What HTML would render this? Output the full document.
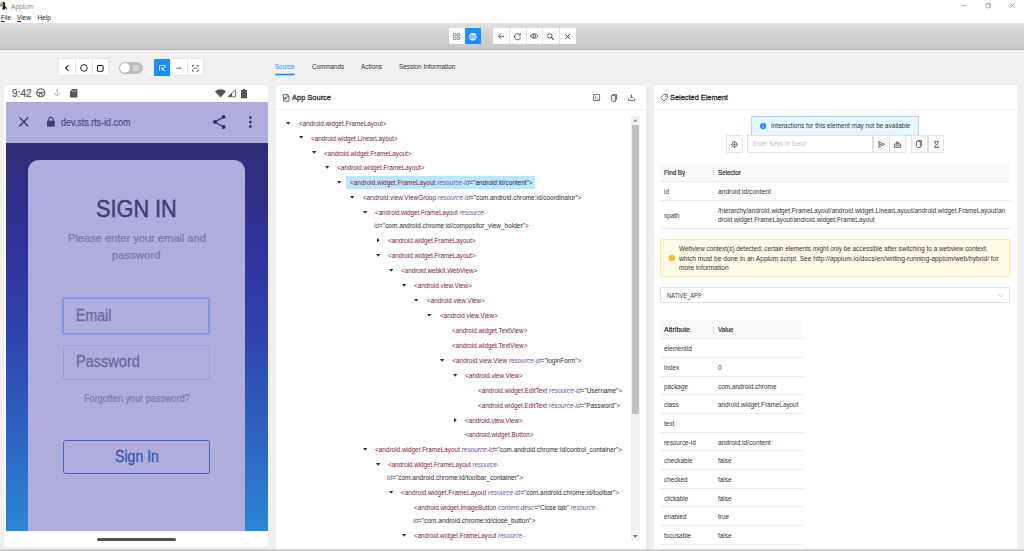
<!DOCTYPE html>
<html><head><meta charset="utf-8"><title>Appium</title>
<style>
*{box-sizing:border-box;margin:0;padding:0}
html,body{width:1024px;height:551px;overflow:hidden;background:#f0f0f0;font-family:"Liberation Sans",sans-serif;}
.a{position:absolute}
.t{position:absolute;white-space:nowrap;line-height:1;transform-origin:0 0}
.t i{font-style:italic}
svg{position:absolute;overflow:visible}

.panel{position:absolute;background:#fff}
.hl{position:absolute;height:0.6px;background:#ececec}
</style></head><body>
<div class="a" style="left:0px;top:0px;width:1024.00px;height:23.00px;background:#fff"></div>
<div class="a" style="left:0px;top:23px;width:1024.00px;height:27.00px;background:linear-gradient(#e1e1e1 0%,#d2d2d2 45%,#c9c9c9 100%);border-bottom:0.8px solid #b0b0b0"></div>
<svg style="left:0px;top:0px" width="8" height="10" viewBox="0 0 8 10"><path d="M2.4 2.2Q4.6 1.5 5 3L5.2 6.4L7.3 8.4L6.8 8.9L5.1 8L4.8 9.6H2.2L2.8 7Z" fill="#111"/><path d="M0 2.7Q1.5 2.1 3.1 2.7V4L0 4.2Z" fill="#f5a31a"/><path d="M0 4.4L2.4 4.2L2.6 6.4Q1 6.8 0 6.2Z" fill="#2f9ae8"/><circle cx="3" cy="5" r="0.9" fill="#cf4f6a"/></svg>
<svg style="left:960px;top:2px" width="60" height="8" viewBox="0 0 60 8"><path d="M1 3.5h5" stroke="#888" stroke-width="0.6" fill="none"/><path d="M26 2.2h3.6v3.6h-3.6zM27 2.2v-1h3.6v3.6h-1" stroke="#888" stroke-width="0.6" fill="none"/><path d="M50 1l5 5M55 1l-5 5" stroke="#888" stroke-width="0.6" fill="none"/></svg>
<div class="a" style="left:448.5px;top:28px;width:16.50px;height:16.30px;background:#fff;border-radius:1px 0 0 1px"></div>
<div class="a" style="left:464.8px;top:27.8px;width:16.40px;height:16.70px;background:#1890ff;border-radius:0 1px 1px 0"></div>
<div class="a" style="left:492.7px;top:28px;width:82.90px;height:16.30px;background:#fff;border-radius:1px"></div>
<div class="a" style="left:509.03px;top:28px;width:0.50px;height:16.30px;background:#e2e2e2"></div>
<div class="a" style="left:525.61px;top:28px;width:0.50px;height:16.30px;background:#e2e2e2"></div>
<div class="a" style="left:542.1899999999999px;top:28px;width:0.50px;height:16.30px;background:#e2e2e2"></div>
<div class="a" style="left:558.77px;top:28px;width:0.50px;height:16.30px;background:#e2e2e2"></div>
<svg style="left:453px;top:32.8px" width="7" height="7" viewBox="0 0 7 7"><rect x="0.4" y="0.4" width="2.5" height="2.5" rx="0.5" stroke="#444" stroke-width="0.6" fill="none"/><rect x="4.1" y="0.4" width="2.5" height="2.5" rx="0.5" stroke="#444" stroke-width="0.6" fill="none"/><rect x="0.4" y="4.1" width="2.5" height="2.5" rx="0.5" stroke="#444" stroke-width="0.6" fill="none"/><rect x="4.1" y="4.1" width="2.5" height="2.5" rx="0.5" stroke="#444" stroke-width="0.6" fill="none"/></svg>
<svg style="left:469.2px;top:32.6px" width="7.6" height="7.6" viewBox="0 0 7.6 7.6"><circle cx="3.8" cy="3.8" r="3.8" fill="#fff"/><path d="M0.7 2.3Q3.8 3.1 6.9 2.3M0.2 3.9h7.2M0.7 5.4Q3.8 4.6 6.9 5.4" stroke="#1890ff" stroke-width="0.65" fill="none"/><ellipse cx="3.8" cy="3.8" rx="1.6" ry="3.5" stroke="#1890ff" stroke-width="0.25" fill="none"/></svg>
<svg style="left:497.8px;top:33.0px" width="6.4" height="6.6" viewBox="0 0 6.4 6.6"><path d="M6 3.3H0.6M3.2 0.5L0.5 3.3l2.7 2.8" stroke="#333" stroke-width="0.75" fill="none"/></svg>
<svg style="left:514px;top:32.8px" width="7" height="7" viewBox="0 0 7 7"><path d="M6.0 1.9A3.1 3.1 0 1 0 6.5 4.3" stroke="#333" stroke-width="0.75" fill="none"/><path d="M6.5 0.6v1.6h-1.6" stroke="#333" stroke-width="0.7" fill="none"/></svg>
<svg style="left:529.8px;top:33.3px" width="8.4" height="6" viewBox="0 0 8.4 6"><path d="M0.3 3C2 0 6.4 0 8.1 3C6.4 6 2 6 0.3 3Z" stroke="#333" stroke-width="0.75" fill="none"/><circle cx="4.2" cy="3" r="1.4" stroke="#333" stroke-width="0.75" fill="none"/></svg>
<svg style="left:547.3px;top:32.8px" width="7" height="7" viewBox="0 0 7 7"><circle cx="2.8" cy="2.8" r="2.2" stroke="#333" stroke-width="0.75" fill="none"/><path d="M4.4 4.4l2.3 2.3" stroke="#333" stroke-width="1.1" fill="none"/></svg>
<svg style="left:565.1px;top:33.8px" width="5" height="5" viewBox="0 0 5 5"><path d="M0.3 0.3l4.4 4.4M4.7 0.3L0.3 4.7" stroke="#333" stroke-width="0.85" fill="none"/></svg>
<div class="a" style="left:58px;top:58.4px;width:51.20px;height:17.60px;background:#fff;border:0.6px solid #e6e6e6;border-radius:1.5px"></div>
<div class="a" style="left:74.95px;top:59px;width:0.60px;height:16.40px;background:#e4e4e4"></div>
<div class="a" style="left:91.60000000000001px;top:59px;width:0.60px;height:16.40px;background:#e4e4e4"></div>
<svg style="left:65.1px;top:65.1px" width="4" height="6.2" viewBox="0 0 4 6.2"><path d="M3.4 0.3L0.7 3.1l2.7 2.8" stroke="#222" stroke-width="1.15" fill="none"/></svg>
<svg style="left:79.5px;top:64.2px" width="7.8" height="7.8" viewBox="0 0 7.8 7.8"><circle cx="3.9" cy="3.9" r="3.35" stroke="#222" stroke-width="1" fill="none"/></svg>
<svg style="left:96.7px;top:64.8px" width="6.6" height="6.8" viewBox="0 0 6.6 6.8"><rect x="0.5" y="0.5" width="5.6" height="5.8" rx="0.3" stroke="#222" stroke-width="1" fill="none"/></svg>
<div class="a" style="left:119.2px;top:61.9px;width:24.00px;height:12.10px;background:#bfbfbf;border-radius:6.1px"></div>
<div class="a" style="left:120.2px;top:62.9px;width:10.10px;height:10.10px;background:#fff;border-radius:50%;box-shadow:0 0.5px 1px rgba(0,0,0,.25)"></div>
<svg style="left:133.1px;top:65.1px" width="6" height="6" viewBox="0 0 6 6"><circle cx="3" cy="3" r="2.5" stroke="#ececec" stroke-width="0.8" fill="none"/><circle cx="3" cy="3" r="1" fill="#ececec"/></svg>
<div class="a" style="left:160px;top:58.4px;width:44.20px;height:17.60px;background:#fff;border:0.6px solid #e6e6e6;border-radius:1.5px"></div>
<div class="a" style="left:153.6px;top:58.6px;width:16.60px;height:17.20px;background:#1890ff;border-radius:1.5px 0 0 1.5px"></div>
<div class="a" style="left:187.2px;top:59px;width:0.60px;height:16.40px;background:#e4e4e4"></div>
<svg style="left:158.8px;top:64.7px" width="6.6" height="6.6" viewBox="0 0 6.6 6.6"><path d="M0.5 6V0.5H6V3" stroke="#fff" stroke-width="0.8" fill="none"/><path d="M2.4 2.4L5 3.4L3.9 3.9L6 6L5.6 6.3L3.6 4.2L3.2 5.2Z" fill="#fff" stroke="#fff" stroke-width="0.4"/></svg>
<svg style="left:176.2px;top:66.4px" width="5.4" height="3.4" viewBox="0 0 5.4 3.4"><path d="M0.2 2.3h4.6M3.4 0.7l1.5 1.6" stroke="#333" stroke-width="0.7" fill="none"/></svg>
<svg style="left:192px;top:64.8px" width="6.6" height="6.6" viewBox="0 0 6.6 6.6"><path d="M0.5 2V0.5H2M4.6 0.5H6.1V2M6.1 4.6V6.1H4.6M2 6.1H0.5V4.6M1.5 3.3h3.6" stroke="#333" stroke-width="0.75" fill="none"/></svg>
<div class="a" style="left:4px;top:84.5px;width:263.50px;height:462.30px;background:#fcfcfc"></div>
<div class="a" style="left:5.5px;top:84.5px;width:262px;height:462.3px;background:#fff;overflow:hidden">
<div class="a" style="left:0;top:17.3px;width:262px;height:41.3px;background:#aeaddc"></div>
<div class="a" style="left:0;top:58.6px;width:262px;height:388px;background:linear-gradient(#2f2c76 0%,#31319a 26%,#2f45ac 50%,#2d64c3 77%,#2b87d2 100%)"></div>
<div class="a" style="left:22.2px;top:75px;width:217.5px;height:380px;background:#aeaddc;border-radius:11px 11px 0 0"></div>
<div class="a" style="left:0;top:446.5px;width:262px;height:16px;background:#fff"></div>
<div class="a" style="left:91.5px;top:453.6px;width:79px;height:3px;border-radius:2px;background:#555"></div>
<div class="a" style="left:57.5px;top:213.4px;width:146.4px;height:36px;border-radius:2.5px;background:#aeaddc;border:1px solid #7b94dd;box-shadow:0 0 0 1.6px rgba(115,145,232,.5)"></div>
<div class="a" style="left:57.9px;top:260.4px;width:146.3px;height:35.2px;border-radius:2.5px;border:0.8px solid #a09fd0"></div>
<div class="a" style="left:57.5px;top:355px;width:147px;height:34.9px;border-radius:3px;border:1px solid #4565bd"></div>
</div>
<svg style="left:36.2px;top:88.4px" width="9.6" height="9.6" viewBox="0 0 9.6 9.6"><circle cx="4.8" cy="4.8" r="4" stroke="#555" stroke-width="1.1" fill="none"/><path d="M0.8 4.3h8M3 8.3l1-3.2h1.6l1 3.2" stroke="#555" stroke-width="1" fill="none"/></svg>
<svg style="left:54px;top:89px" width="6.4" height="8.4" viewBox="0 0 6.4 8.4"><circle cx="3.2" cy="1.3" r="0.9" fill="#999"/><path d="M3.2 2.2v4M0.8 4.2c0 3 4.8 3 4.8 0M0.6 4.2h1.2M4.6 4.2h1.2" stroke="#999" stroke-width="0.7" fill="none"/></svg>
<svg style="left:69.5px;top:88.8px" width="7.4" height="8.6" viewBox="0 0 7.4 8.6"><path d="M2.4 0H7.4V8.6H0V2.4Z" fill="#555"/><path d="M2.6 1.2v2M4.1 1.2v2M5.6 1.2v2" stroke="#ddd" stroke-width="0.6"/></svg>
<svg style="left:215px;top:89px" width="11" height="8.4" viewBox="0 0 11 8.4"><path d="M0 2.6C3 -0.6 8 -0.6 11 2.6L5.5 8.4Z" fill="#555"/></svg>
<svg style="left:227.2px;top:89.2px" width="9" height="8.2" viewBox="0 0 9 8.2"><path d="M8.5 0.8V7.8H0.9Z" stroke="#555" stroke-width="0.8" fill="none"/><path d="M5 4V7.8H0.9Z" fill="#555"/></svg>
<svg style="left:241px;top:88.5px" width="6" height="9.2" viewBox="0 0 6 9.2"><path d="M1.8 0h2.4v1H6v8.2H0V1h1.8Z" fill="#555"/></svg>
<svg style="left:18.6px;top:117.3px" width="9.6" height="9.6" viewBox="0 0 9.6 9.6"><path d="M0.4 0.4l8.8 8.8M9.2 0.4L0.4 9.2" stroke="#2e2b70" stroke-width="1.3" fill="none"/></svg>
<svg style="left:46.9px;top:117.4px" width="7.8" height="9.6" viewBox="0 0 7.8 9.6"><path d="M0 3.6h7.8v6H0z" fill="#3c3a80"/><path d="M1.8 3.8V2.4a2.1 2.1 0 0 1 4.2 0V3.8" stroke="#3c3a80" stroke-width="1.1" fill="none"/></svg>
<svg style="left:213px;top:115.3px" width="13" height="14" viewBox="0 0 13 14"><path d="M10.6 1.9L1.9 6.9L10.6 12" stroke="#2e2b70" stroke-width="1.2" fill="none"/><circle cx="10.6" cy="1.9" r="1.9" fill="#2e2b70"/><circle cx="1.9" cy="6.9" r="1.9" fill="#2e2b70"/><circle cx="10.6" cy="12" r="1.9" fill="#2e2b70"/></svg>
<svg style="left:249px;top:116px" width="3" height="12" viewBox="0 0 3 12"><circle cx="1.4" cy="1.5" r="1.35" fill="#2e2b70"/><circle cx="1.4" cy="6.1" r="1.35" fill="#2e2b70"/><circle cx="1.4" cy="10.6" r="1.35" fill="#2e2b70"/></svg>
<svg style="left:275px;top:73px" width="20" height="3" viewBox="0 0 20 3"><rect x="0.3" y="0.7" width="19.3" height="1.6" fill="#1890ff"/></svg>
<div class="a" style="left:276px;top:84.5px;width:370.20px;height:464.50px;background:#fff"></div>
<div class="a" style="left:276px;top:108.6px;width:370.20px;height:0.70px;background:#f0f0f0"></div>
<div class="a" style="left:646.2px;top:84.5px;width:7.40px;height:464.50px;background:linear-gradient(90deg,#e9e9e9,#efefef 50%)"></div>
<div class="a" style="left:653.6px;top:84.5px;width:363.90px;height:464.50px;background:#fff"></div>
<div class="a" style="left:653.6px;top:109px;width:363.90px;height:0.70px;background:#f0f0f0"></div>
<div class="a" style="left:0px;top:548.9px;width:1024.00px;height:2.10px;background:linear-gradient(#dadada,#c2c2c2)"></div>
<svg style="left:282.7px;top:93.7px" width="6.4" height="7.6" viewBox="0 0 6.4 7.6"><path d="M0.4 0.4H4.2L6 2.2V7.2H0.4Z" stroke="#333" stroke-width="0.7" fill="none"/><path d="M4 0.4V2.4H6" stroke="#333" stroke-width="0.7" fill="none"/><path d="M1.8 3.4h1.6v1.4H1.8M1.8 3v3" stroke="#333" stroke-width="0.7" fill="none"/></svg>
<svg style="left:660px;top:94px" width="8" height="7.4" viewBox="0 0 8 7.4"><path d="M3.9 0.4H7.4V3.9L3.9 7L0.5 3.6Z" stroke="#333" stroke-width="0.7" fill="none"/><circle cx="5.7" cy="2.1" r="0.6" fill="#333"/></svg>
<svg style="left:593.3px;top:93.9px" width="7" height="7" viewBox="0 0 7 7"><rect x="0.4" y="0.4" width="6.2" height="6.2" rx="0.5" stroke="#333" stroke-width="0.7" fill="none"/><path d="M1.8 2l1.6 1.5L1.8 5M3.8 5h1.6" stroke="#333" stroke-width="0.7" fill="none" stroke-width="0.6"/></svg>
<svg style="left:610.8px;top:93.5px" width="6" height="7.8" viewBox="0 0 6 7.8"><path d="M1.4 0.4H5.6V6.2" stroke="#333" stroke-width="0.7" fill="none"/><path d="M0.4 1.6H4.4V7.4H1.6L0.4 6.2Z" stroke="#333" stroke-width="0.7" fill="none" stroke-width="0.9"/></svg>
<svg style="left:627.6px;top:94px" width="7" height="7.4" viewBox="0 0 7 7.4"><path d="M3.5 0.6V3.8M2.2 2.8L3.5 4.1L4.8 2.8" stroke="#333" stroke-width="0.7" fill="none"/><path d="M0.5 4.6V6.4H6.5V4.6" stroke="#333" stroke-width="0.7" fill="none" stroke-width="0.9"/></svg>
<div class="a" style="left:630.8px;top:116.3px;width:9.00px;height:424.50px;background:#f1f1f1"></div>
<div class="a" style="left:631.8px;top:125.2px;width:7.00px;height:289.30px;background:#c1c1c1"></div>
<svg style="left:633px;top:119px" width="4.6" height="3" viewBox="0 0 4.6 3"><path d="M0 2.6L2.3 0.2L4.6 2.6Z" fill="#8a8a8a"/></svg>
<svg style="left:633px;top:534.6px" width="4.6" height="3" viewBox="0 0 4.6 3"><path d="M0 0.2L2.3 2.6L4.6 0.2Z" fill="#505050"/></svg>
<div class="a" style="left:346.4px;top:176.3px;width:188.40px;height:12.80px;background:#bae7ff"></div>
<svg style="left:286.2px;top:121.5px" width="4.4" height="2.8" viewBox="0 0 4.4 2.8"><path d="M0 0H4.4L2.2 2.8Z" fill="#333"/></svg>
<svg style="left:299.02px;top:136.46px" width="4.4" height="2.8" viewBox="0 0 4.4 2.8"><path d="M0 0H4.4L2.2 2.8Z" fill="#333"/></svg>
<svg style="left:311.84px;top:151.42px" width="4.4" height="2.8" viewBox="0 0 4.4 2.8"><path d="M0 0H4.4L2.2 2.8Z" fill="#333"/></svg>
<svg style="left:324.66px;top:166.38px" width="4.4" height="2.8" viewBox="0 0 4.4 2.8"><path d="M0 0H4.4L2.2 2.8Z" fill="#333"/></svg>
<svg style="left:337.48px;top:181.34px" width="4.4" height="2.8" viewBox="0 0 4.4 2.8"><path d="M0 0H4.4L2.2 2.8Z" fill="#333"/></svg>
<svg style="left:350.3px;top:196.3px" width="4.4" height="2.8" viewBox="0 0 4.4 2.8"><path d="M0 0H4.4L2.2 2.8Z" fill="#333"/></svg>
<svg style="left:363.12px;top:211.26px" width="4.4" height="2.8" viewBox="0 0 4.4 2.8"><path d="M0 0H4.4L2.2 2.8Z" fill="#333"/></svg>
<svg style="left:376.94px;top:238.12px" width="2.8" height="4.4" viewBox="0 0 2.8 4.4"><path d="M0 0V4.4L2.8 2.2Z" fill="#333"/></svg>
<svg style="left:375.94px;top:253.88px" width="4.4" height="2.8" viewBox="0 0 4.4 2.8"><path d="M0 0H4.4L2.2 2.8Z" fill="#333"/></svg>
<svg style="left:388.76px;top:268.84px" width="4.4" height="2.8" viewBox="0 0 4.4 2.8"><path d="M0 0H4.4L2.2 2.8Z" fill="#333"/></svg>
<svg style="left:401.58px;top:283.8px" width="4.4" height="2.8" viewBox="0 0 4.4 2.8"><path d="M0 0H4.4L2.2 2.8Z" fill="#333"/></svg>
<svg style="left:414.4px;top:298.76px" width="4.4" height="2.8" viewBox="0 0 4.4 2.8"><path d="M0 0H4.4L2.2 2.8Z" fill="#333"/></svg>
<svg style="left:427.22px;top:313.72px" width="4.4" height="2.8" viewBox="0 0 4.4 2.8"><path d="M0 0H4.4L2.2 2.8Z" fill="#333"/></svg>
<svg style="left:440.04px;top:358.6px" width="4.4" height="2.8" viewBox="0 0 4.4 2.8"><path d="M0 0H4.4L2.2 2.8Z" fill="#333"/></svg>
<svg style="left:452.86px;top:373.56px" width="4.4" height="2.8" viewBox="0 0 4.4 2.8"><path d="M0 0H4.4L2.2 2.8Z" fill="#333"/></svg>
<svg style="left:453.86px;top:417.64px" width="2.8" height="4.4" viewBox="0 0 2.8 4.4"><path d="M0 0V4.4L2.8 2.2Z" fill="#333"/></svg>
<svg style="left:363.12px;top:448.36px" width="4.4" height="2.8" viewBox="0 0 4.4 2.8"><path d="M0 0H4.4L2.2 2.8Z" fill="#333"/></svg>
<svg style="left:375.94px;top:463.32px" width="4.4" height="2.8" viewBox="0 0 4.4 2.8"><path d="M0 0H4.4L2.2 2.8Z" fill="#333"/></svg>
<svg style="left:388.76px;top:490.98px" width="4.4" height="2.8" viewBox="0 0 4.4 2.8"><path d="M0 0H4.4L2.2 2.8Z" fill="#333"/></svg>
<svg style="left:401.58px;top:533.6px" width="4.4" height="2.8" viewBox="0 0 4.4 2.8"><path d="M0 0H4.4L2.2 2.8Z" fill="#333"/></svg>
<div class="a" style="left:751.2px;top:116.3px;width:167.40px;height:19.30px;background:#e6f7ff;border:0.6px solid #a8dcff;border-radius:1px"></div>
<svg style="left:759.5px;top:122.6px" width="6.2" height="6.2" viewBox="0 0 6.2 6.2"><circle cx="3.1" cy="3.1" r="3.1" fill="#1890ff"/><path d="M3.1 2.7v2.1" stroke="#fff" stroke-width="0.7"/><circle cx="3.1" cy="1.6" r="0.45" fill="#fff"/></svg>
<div class="a" style="left:726.3px;top:135.2px;width:16.60px;height:17.80px;background:#fff;border:0.6px solid #e2e2e2;border-radius:1px;border-radius:1px"></div>
<div class="a" style="left:746.8px;top:135.2px;width:126.20px;height:17.80px;background:#fff;border:0.6px solid #e2e2e2;border-radius:1px 0 0 1px"></div>
<div class="a" style="left:872.5px;top:135.2px;width:17.00px;height:17.80px;background:#fff;border:0.6px solid #e2e2e2;border-radius:1px;"></div>
<div class="a" style="left:889.0px;top:135.2px;width:16.90px;height:17.80px;background:#fff;border:0.6px solid #e2e2e2;border-radius:1px;"></div>
<div class="a" style="left:911.4px;top:135.2px;width:16.70px;height:17.80px;background:#fff;border:0.6px solid #e2e2e2;border-radius:1px;"></div>
<div class="a" style="left:927.6px;top:135.2px;width:16.90px;height:17.80px;background:#fff;border:0.6px solid #e2e2e2;border-radius:1px;"></div>
<svg style="left:730.9px;top:140.5px" width="7" height="7" viewBox="0 0 7 7"><circle cx="3.5" cy="3.5" r="2.4" stroke="#333" stroke-width="0.7" fill="none" stroke-width="0.8"/><circle cx="3.5" cy="3.5" r="0.9" fill="#333"/><path d="M3.5 0v1.2M3.5 5.8V7M0 3.5h1.2M5.8 3.5H7" stroke="#333" stroke-width="0.7" fill="none"/></svg>
<svg style="left:877.6px;top:140.6px" width="6.8" height="6.8" viewBox="0 0 6.8 6.8"><path d="M0.5 0.5L6.3 3.4L0.5 6.3L1.6 3.4Z" stroke="#333" stroke-width="0.7" fill="none"/><path d="M1.6 3.4h2.4" stroke="#333" stroke-width="0.7" fill="none"/></svg>
<svg style="left:894px;top:140.6px" width="7" height="6.8" viewBox="0 0 7 6.8"><path d="M0.4 3h6.2v3.4H0.4ZM2.4 3V1.6h2.2V3M3.5 1.6V0.3" stroke="#333" stroke-width="0.7" fill="none"/><path d="M1.5 4.7h4" stroke="#333" stroke-width="0.7" fill="none" stroke-width="0.5"/></svg>
<svg style="left:916.4px;top:140.2px" width="6" height="7.8" viewBox="0 0 6 7.8"><path d="M1.4 0.4H5.6V6.2" stroke="#333" stroke-width="0.7" fill="none"/><path d="M0.4 1.6H4.4V7.4H1.6L0.4 6.2Z" stroke="#333" stroke-width="0.7" fill="none" stroke-width="0.9"/></svg>
<svg style="left:933.7px;top:140.5px" width="5" height="7" viewBox="0 0 5 7"><path d="M0.3 0.4H4.7M0.3 6.6H4.7M0.9 0.4V2L2.5 3.5L0.9 5V6.6M4.1 0.4V2L2.5 3.5L4.1 5V6.6" stroke="#333" stroke-width="0.7" fill="none"/></svg>
<div class="a" style="left:660.2px;top:162.8px;width:349.50px;height:18.80px;background:#fafafa"></div>
<div class="a" style="left:660.2px;top:181.4px;width:349.50px;height:0.60px;background:#ececec"></div>
<div class="a" style="left:660.2px;top:199.8px;width:349.50px;height:0.60px;background:#ececec"></div>
<div class="a" style="left:660.2px;top:228.1px;width:349.50px;height:0.60px;background:#ececec"></div>
<div class="a" style="left:713.4px;top:167.5px;width:0.50px;height:9.50px;background:#e4e4e4"></div>
<div class="a" style="left:660.4px;top:238.5px;width:349.40px;height:38.10px;background:#fffbe6;border:0.6px solid #ffeaa6;border-radius:1px"></div>
<svg style="left:668.6px;top:254.8px" width="6" height="6" viewBox="0 0 6 6"><circle cx="3" cy="3" r="3" fill="#faad14"/><path d="M3 1.4v2" stroke="#fff" stroke-width="0.7"/><circle cx="3" cy="4.5" r="0.4" fill="#fff"/></svg>
<div class="a" style="left:660.2px;top:287.2px;width:349.60px;height:15.90px;background:#fff;border:0.6px solid #e0e0e0;border-radius:1px"></div>
<svg style="left:998.2px;top:293.6px" width="5.4" height="3.2" viewBox="0 0 5.4 3.2"><path d="M0.3 0.3L2.7 2.7L5.1 0.3" stroke="#bfbfbf" stroke-width="0.7" fill="none"/></svg>
<div class="a" style="left:660.2px;top:320.1px;width:143.00px;height:18.20px;background:#fafafa"></div>
<div class="a" style="left:713.4px;top:324.5px;width:0.50px;height:9.50px;background:#e4e4e4"></div>
<div class="a" style="left:660.2px;top:338.2px;width:143.00px;height:0.60px;background:#ececec"></div>
<div class="a" style="left:660.2px;top:356.87px;width:143.00px;height:0.60px;background:#ececec"></div>
<div class="a" style="left:660.2px;top:375.54px;width:143.00px;height:0.60px;background:#ececec"></div>
<div class="a" style="left:660.2px;top:394.21px;width:143.00px;height:0.60px;background:#ececec"></div>
<div class="a" style="left:660.2px;top:412.88px;width:143.00px;height:0.60px;background:#ececec"></div>
<div class="a" style="left:660.2px;top:431.55px;width:143.00px;height:0.60px;background:#ececec"></div>
<div class="a" style="left:660.2px;top:450.22px;width:143.00px;height:0.60px;background:#ececec"></div>
<div class="a" style="left:660.2px;top:468.89px;width:143.00px;height:0.60px;background:#ececec"></div>
<div class="a" style="left:660.2px;top:487.56px;width:143.00px;height:0.60px;background:#ececec"></div>
<div class="a" style="left:660.2px;top:506.23px;width:143.00px;height:0.60px;background:#ececec"></div>
<div class="a" style="left:660.2px;top:524.9px;width:143.00px;height:0.60px;background:#ececec"></div>
<div class="a" style="left:660.2px;top:543.57px;width:143.00px;height:0.60px;background:#ececec"></div>
<div class="t" style="left:11.60px;top:89.00px;font-size:10.4px;color:#555;transform:scaleX(0.9686);-webkit-text-stroke:0.15px #555;">9:42</div>
<div class="t" style="left:60.80px;top:118.00px;font-size:10.4px;color:#4a4a8c;transform:scaleX(0.8606);-webkit-text-stroke:0.2px #4a4a8c;">dev.sts.rts-id.com</div>
<div class="t" style="left:95.90px;top:197.00px;font-size:24.2px;color:#3e3e78;transform:scaleX(0.8973);-webkit-text-stroke:0.45px #3e3e78;">SIGN IN</div>
<div class="t" style="left:67.50px;top:232.00px;font-size:11.7px;color:#7676ae;transform:scaleX(0.9469);-webkit-text-stroke:0.2px #7676ae;">Please enter your email and</div>
<div class="t" style="left:112.30px;top:249.00px;font-size:11.7px;color:#7676ae;transform:scaleX(0.9694);-webkit-text-stroke:0.2px #7676ae;">password</div>
<div class="t" style="left:75.90px;top:308.00px;font-size:15.7px;color:#6a6aa2;transform:scaleX(0.9023);-webkit-text-stroke:0.3px #6a6aa2;">Email</div>
<div class="t" style="left:75.90px;top:354.00px;font-size:15.7px;color:#6a6aa2;transform:scaleX(0.9276);-webkit-text-stroke:0.3px #6a6aa2;">Password</div>
<div class="t" style="left:83.50px;top:394.00px;font-size:10.1px;color:#7676ae;transform:scaleX(0.9022);-webkit-text-stroke:0.15px #7676ae;">Forgotten your password?</div>
<div class="t" style="left:114.50px;top:449.00px;font-size:15.7px;color:#3558b0;transform:scaleX(0.8988);-webkit-text-stroke:0.3px #3558b0;">Sign In</div>
<div class="t" style="left:10.50px;top:4.00px;font-size:6.6px;color:#8a8a8a;transform:scaleX(1.0063);">Appium</div>
<div class="t" style="left:1.20px;top:15.00px;font-size:6.5px;color:#222;transform:scaleX(0.9333);"><u>F</u>ile</div>
<div class="t" style="left:17.20px;top:15.00px;font-size:6.5px;color:#222;transform:scaleX(0.9868);"><u>V</u>iew</div>
<div class="t" style="left:37.60px;top:15.00px;font-size:6.5px;color:#222;">Help</div>
<div class="t" style="left:275.30px;top:63.00px;font-size:7.5px;color:#1890ff;transform:scaleX(0.8205);">Source</div>
<div class="t" style="left:311.60px;top:63.00px;font-size:7.5px;color:#333;transform:scaleX(0.8394);">Commands</div>
<div class="t" style="left:360.80px;top:63.00px;font-size:7.5px;color:#333;transform:scaleX(0.8574);">Actions</div>
<div class="t" style="left:398.90px;top:63.00px;font-size:7.5px;color:#333;transform:scaleX(0.8492);">Session Information</div>
<div class="t" style="left:291.90px;top:94.00px;font-size:8.1px;color:#262626;transform:scaleX(0.9221);-webkit-text-stroke:0.28px #262626;">App Source</div>
<div class="t" style="left:670.00px;top:94.00px;font-size:8.1px;color:#262626;transform:scaleX(0.9125);-webkit-text-stroke:0.28px #262626;">Selected Element</div>
<div class="t" style="left:298.50px;top:121.00px;font-size:6.4px;color:#7b2433;transform:scaleX(0.9880);"><span style="color:#7b2433">&lt;android.widget.FrameLayout</span><span style="color:#7b2433">&gt;</span></div>
<div class="t" style="left:311.32px;top:136.00px;font-size:6.4px;color:#7b2433;transform:scaleX(0.9880);"><span style="color:#7b2433">&lt;android.widget.LinearLayout</span><span style="color:#7b2433">&gt;</span></div>
<div class="t" style="left:324.14px;top:151.00px;font-size:6.4px;color:#7b2433;transform:scaleX(0.9880);"><span style="color:#7b2433">&lt;android.widget.FrameLayout</span><span style="color:#7b2433">&gt;</span></div>
<div class="t" style="left:336.96px;top:165.00px;font-size:6.4px;color:#7b2433;transform:scaleX(0.9880);"><span style="color:#7b2433">&lt;android.widget.FrameLayout</span><span style="color:#7b2433">&gt;</span></div>
<div class="t" style="left:349.78px;top:180.00px;font-size:6.4px;color:#7b2433;transform:scaleX(1.0073);"><span style="color:#7b2433">&lt;android.widget.FrameLayout</span> <i style="color:#6f4fa6">resource-id</i><span style="color:#2a2a2a">=&quot;android:id/content&quot;</span><span style="color:#7b2433">&gt;</span></div>
<div class="t" style="left:362.60px;top:195.00px;font-size:6.4px;color:#7b2433;transform:scaleX(1.0067);"><span style="color:#7b2433">&lt;android.view.ViewGroup</span> <i style="color:#6f4fa6">resource-id</i><span style="color:#2a2a2a">=&quot;com.android.chrome:id/coordinator&quot;</span><span style="color:#7b2433">&gt;</span></div>
<div class="t" style="left:375.42px;top:210.00px;font-size:6.4px;color:#7b2433;transform:scaleX(0.9768);"><span style="color:#7b2433">&lt;android.widget.FrameLayout</span> <i style="color:#6f4fa6">resource-</i></div>
<div class="t" style="left:374.12px;top:223.00px;font-size:6.4px;color:#7b2433;transform:scaleX(1.0130);"><i style="color:#6f4fa6">id</i><span style="color:#2a2a2a">=&quot;com.android.chrome:id/compositor_view_holder&quot;</span><span style="color:#7b2433">&gt;</span></div>
<div class="t" style="left:388.24px;top:238.00px;font-size:6.4px;color:#7b2433;transform:scaleX(0.9880);"><span style="color:#7b2433">&lt;android.widget.FrameLayout</span><span style="color:#7b2433">&gt;</span></div>
<div class="t" style="left:388.24px;top:253.00px;font-size:6.4px;color:#7b2433;transform:scaleX(0.9880);"><span style="color:#7b2433">&lt;android.widget.FrameLayout</span><span style="color:#7b2433">&gt;</span></div>
<div class="t" style="left:401.06px;top:268.00px;font-size:6.4px;color:#7b2433;transform:scaleX(0.9880);"><span style="color:#7b2433">&lt;android.webkit.WebView</span><span style="color:#7b2433">&gt;</span></div>
<div class="t" style="left:413.88px;top:283.00px;font-size:6.4px;color:#7b2433;transform:scaleX(0.9880);"><span style="color:#7b2433">&lt;android.view.View</span><span style="color:#7b2433">&gt;</span></div>
<div class="t" style="left:426.70px;top:298.00px;font-size:6.4px;color:#7b2433;transform:scaleX(0.9880);"><span style="color:#7b2433">&lt;android.view.View</span><span style="color:#7b2433">&gt;</span></div>
<div class="t" style="left:439.52px;top:313.00px;font-size:6.4px;color:#7b2433;transform:scaleX(0.9880);"><span style="color:#7b2433">&lt;android.view.View</span><span style="color:#7b2433">&gt;</span></div>
<div class="t" style="left:452.34px;top:328.00px;font-size:6.4px;color:#7b2433;transform:scaleX(0.9880);"><span style="color:#7b2433">&lt;android.widget.TextView</span><span style="color:#7b2433">&gt;</span></div>
<div class="t" style="left:452.34px;top:343.00px;font-size:6.4px;color:#7b2433;transform:scaleX(0.9880);"><span style="color:#7b2433">&lt;android.widget.TextView</span><span style="color:#7b2433">&gt;</span></div>
<div class="t" style="left:452.34px;top:358.00px;font-size:6.4px;color:#7b2433;"><span style="color:#7b2433">&lt;android.view.View</span> <i style="color:#6f4fa6">resource-id</i><span style="color:#2a2a2a">=&quot;loginForm&quot;</span><span style="color:#7b2433">&gt;</span></div>
<div class="t" style="left:465.16px;top:373.00px;font-size:6.4px;color:#7b2433;transform:scaleX(0.9880);"><span style="color:#7b2433">&lt;android.view.View</span><span style="color:#7b2433">&gt;</span></div>
<div class="t" style="left:477.98px;top:388.00px;font-size:6.4px;color:#7b2433;transform:scaleX(0.9929);"><span style="color:#7b2433">&lt;android.widget.EditText</span> <i style="color:#6f4fa6">resource-id</i><span style="color:#2a2a2a">=&quot;Username&quot;</span><span style="color:#7b2433">&gt;</span></div>
<div class="t" style="left:477.98px;top:403.00px;font-size:6.4px;color:#7b2433;transform:scaleX(0.9888);"><span style="color:#7b2433">&lt;android.widget.EditText</span> <i style="color:#6f4fa6">resource-id</i><span style="color:#2a2a2a">=&quot;Password&quot;</span><span style="color:#7b2433">&gt;</span></div>
<div class="t" style="left:465.16px;top:418.00px;font-size:6.4px;color:#7b2433;transform:scaleX(0.9880);"><span style="color:#7b2433">&lt;android.view.View</span><span style="color:#7b2433">&gt;</span></div>
<div class="t" style="left:465.16px;top:432.00px;font-size:6.4px;color:#7b2433;transform:scaleX(0.9880);"><span style="color:#7b2433">&lt;android.widget.Button</span><span style="color:#7b2433">&gt;</span></div>
<div class="t" style="left:375.42px;top:447.00px;font-size:6.4px;color:#7b2433;transform:scaleX(1.0024);"><span style="color:#7b2433">&lt;android.widget.FrameLayout</span> <i style="color:#6f4fa6">resource-id</i><span style="color:#2a2a2a">=&quot;com.android.chrome:id/control_container&quot;</span><span style="color:#7b2433">&gt;</span></div>
<div class="t" style="left:388.24px;top:462.00px;font-size:6.4px;color:#7b2433;transform:scaleX(0.9775);"><span style="color:#7b2433">&lt;android.widget.FrameLayout</span> <i style="color:#6f4fa6">resource-</i></div>
<div class="t" style="left:386.94px;top:475.00px;font-size:6.4px;color:#7b2433;transform:scaleX(1.0211);"><i style="color:#6f4fa6">id</i><span style="color:#2a2a2a">=&quot;com.android.chrome:id/toolbar_container&quot;</span><span style="color:#7b2433">&gt;</span></div>
<div class="t" style="left:401.06px;top:490.00px;font-size:6.4px;color:#7b2433;transform:scaleX(1.0057);"><span style="color:#7b2433">&lt;android.widget.FrameLayout</span> <i style="color:#6f4fa6">resource-id</i><span style="color:#2a2a2a">=&quot;com.android.chrome:id/toolbar&quot;</span><span style="color:#7b2433">&gt;</span></div>
<div class="t" style="left:413.88px;top:505.00px;font-size:6.4px;color:#7b2433;transform:scaleX(0.9875);"><span style="color:#7b2433">&lt;android.widget.ImageButton</span> <i style="color:#6f4fa6">content-desc</i><span style="color:#2a2a2a">=&quot;Close tab&quot;</span> <i style="color:#6f4fa6">resource-</i></div>
<div class="t" style="left:412.58px;top:518.00px;font-size:6.4px;color:#7b2433;transform:scaleX(1.0184);"><i style="color:#6f4fa6">id</i><span style="color:#2a2a2a">=&quot;com.android.chrome:id/close_button&quot;</span><span style="color:#7b2433">&gt;</span></div>
<div class="t" style="left:413.88px;top:533.00px;font-size:6.4px;color:#7b2433;transform:scaleX(0.9718);"><span style="color:#7b2433">&lt;android.widget.FrameLayout</span> <i style="color:#6f4fa6">resource-</i></div>
<div class="t" style="left:770.80px;top:123.00px;font-size:6.9px;color:#333;transform:scaleX(0.9308);">Interactions for this element may not be available</div>
<div class="t" style="left:752.80px;top:141.00px;font-size:6.8px;color:#c2c2c2;transform:scaleX(0.9031);">Enter Keys to Send</div>
<div class="t" style="left:664.40px;top:170.00px;font-size:6.5px;color:#222;transform:scaleX(0.9571);-webkit-text-stroke:0.15px #222;">Find By</div>
<div class="t" style="left:717.90px;top:170.00px;font-size:6.5px;color:#222;transform:scaleX(0.9598);-webkit-text-stroke:0.15px #222;">Selector</div>
<div class="t" style="left:664.40px;top:189.00px;font-size:6.4px;color:#333;transform:scaleX(0.9700);">id</div>
<div class="t" style="left:717.90px;top:189.00px;font-size:6.4px;color:#333;transform:scaleX(1.0411);">android:id/content</div>
<div class="t" style="left:664.40px;top:213.00px;font-size:6.4px;color:#333;transform:scaleX(0.9974);">xpath</div>
<div class="t" style="left:717.90px;top:208.00px;font-size:6.4px;color:#333;transform:scaleX(1.0093);">/hierarchy/android.widget.FrameLayout/android.widget.LinearLayout/android.widget.FrameLayout/an</div>
<div class="t" style="left:717.90px;top:217.00px;font-size:6.4px;color:#333;">droid.widget.FrameLayout/android.widget.FrameLayout</div>
<div class="t" style="left:679.40px;top:246.00px;font-size:6.4px;color:#333;transform:scaleX(0.9975);">Webview context(s) detected; certain elements might only be accessible after switching to a webview context,</div>
<div class="t" style="left:679.40px;top:256.00px;font-size:6.4px;color:#333;transform:scaleX(1.0389);">which must be done in an Appium script. See http://appium.io/docs/en/writing-running-appium/web/hybrid/ for</div>
<div class="t" style="left:679.40px;top:265.00px;font-size:6.4px;color:#333;transform:scaleX(1.0343);">more information</div>
<div class="t" style="left:666.80px;top:293.00px;font-size:6.4px;color:#333;transform:scaleX(0.8908);">NATIVE_APP</div>
<div class="t" style="left:664.40px;top:327.00px;font-size:6.5px;color:#222;transform:scaleX(1.0735);-webkit-text-stroke:0.15px #222;">Attribute</div>
<div class="t" style="left:718.00px;top:327.00px;font-size:6.5px;color:#222;transform:scaleX(0.9594);-webkit-text-stroke:0.15px #222;">Value</div>
<div class="t" style="left:664.40px;top:346.00px;font-size:6.4px;color:#333;transform:scaleX(0.9900);">elementId</div>
<div class="t" style="left:664.40px;top:365.00px;font-size:6.4px;color:#333;transform:scaleX(0.9900);">index</div>
<div class="t" style="left:718.00px;top:365.00px;font-size:6.4px;color:#333;">0</div>
<div class="t" style="left:664.40px;top:384.00px;font-size:6.4px;color:#333;transform:scaleX(0.9900);">package</div>
<div class="t" style="left:718.00px;top:384.00px;font-size:6.4px;color:#333;transform:scaleX(1.0040);">com.android.chrome</div>
<div class="t" style="left:664.40px;top:402.00px;font-size:6.4px;color:#333;transform:scaleX(0.9900);">class</div>
<div class="t" style="left:718.00px;top:402.00px;font-size:6.4px;color:#333;transform:scaleX(0.9926);">android.widget.FrameLayout</div>
<div class="t" style="left:664.40px;top:421.00px;font-size:6.4px;color:#333;transform:scaleX(0.9900);">text</div>
<div class="t" style="left:664.40px;top:440.00px;font-size:6.4px;color:#333;transform:scaleX(0.9900);">resource-id</div>
<div class="t" style="left:718.00px;top:440.00px;font-size:6.4px;color:#333;transform:scaleX(1.0371);">android:id/content</div>
<div class="t" style="left:664.40px;top:458.00px;font-size:6.4px;color:#333;transform:scaleX(0.9900);">checkable</div>
<div class="t" style="left:718.00px;top:458.00px;font-size:6.4px;color:#333;">false</div>
<div class="t" style="left:664.40px;top:477.00px;font-size:6.4px;color:#333;transform:scaleX(0.9900);">checked</div>
<div class="t" style="left:718.00px;top:477.00px;font-size:6.4px;color:#333;">false</div>
<div class="t" style="left:664.40px;top:496.00px;font-size:6.4px;color:#333;transform:scaleX(0.9900);">clickable</div>
<div class="t" style="left:718.00px;top:496.00px;font-size:6.4px;color:#333;">false</div>
<div class="t" style="left:664.40px;top:514.00px;font-size:6.4px;color:#333;transform:scaleX(0.9900);">enabled</div>
<div class="t" style="left:718.00px;top:514.00px;font-size:6.4px;color:#333;">true</div>
<div class="t" style="left:664.40px;top:533.00px;font-size:6.4px;color:#333;transform:scaleX(0.9900);">focusable</div>
<div class="t" style="left:718.00px;top:533.00px;font-size:6.4px;color:#333;">false</div>
</body></html>
